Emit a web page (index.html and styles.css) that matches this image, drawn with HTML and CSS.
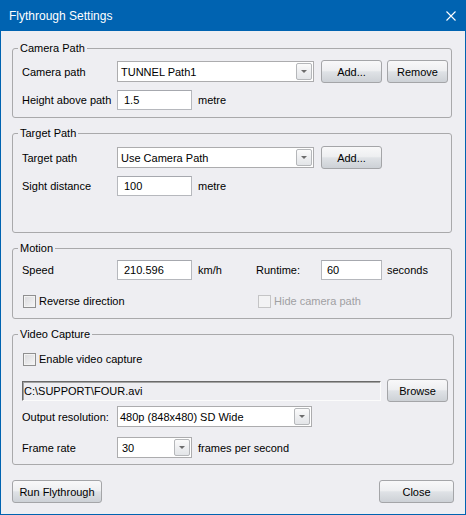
FILE: index.html
```html
<!DOCTYPE html>
<html lang="en">
<head>
    <meta charset="UTF-8">
    <title>Flythrough Settings</title>
    <link rel="stylesheet" href="styles.css">
</head>
<body>
    <div class="window">
        <div class="titlebar">
            <span class="title">Flythrough Settings</span>
            <svg class="close-x" width="10" height="10" viewBox="0 0 10 10">
                <path d="M0.5 0.5 L9.5 9.5 M9.5 0.5 L0.5 9.5" stroke="#fff" stroke-width="1.1" fill="none"/>
            </svg>
        </div>

        <div class="dialog">
            <fieldset class="group group-camera">
                <legend>Camera Path</legend>
                <div class="row row-tall">
                    <label class="lbl">Camera path</label>
                    <div class="combo combo-path">
                        <span class="combo-text">TUNNEL Path1</span>
                        <span class="combo-btn"><i class="arrow"></i></span>
                    </div>
                    <button class="btn btn-add">Add...</button>
                    <button class="btn btn-side">Remove</button>
                </div>
                <div class="row">
                    <label class="lbl">Height above path</label>
                    <div class="field">1.5</div>
                    <span class="unit">metre</span>
                </div>
            </fieldset>

            <fieldset class="group group-target">
                <legend>Target Path</legend>
                <div class="row row-tall">
                    <label class="lbl">Target path</label>
                    <div class="combo combo-path">
                        <span class="combo-text">Use Camera Path</span>
                        <span class="combo-btn"><i class="arrow"></i></span>
                    </div>
                    <button class="btn btn-add">Add...</button>
                </div>
                <div class="row">
                    <label class="lbl">Sight distance</label>
                    <div class="field">100</div>
                    <span class="unit">metre</span>
                </div>
            </fieldset>

            <fieldset class="group group-motion">
                <legend>Motion</legend>
                <div class="row">
                    <label class="lbl">Speed</label>
                    <div class="field">210.596</div>
                    <span class="unit unit-wide">km/h</span>
                    <label class="lbl-runtime">Runtime:</label>
                    <div class="field field-short">60</div>
                    <span class="unit unit-near">seconds</span>
                </div>
                <div class="row row-gap">
                    <div class="check check-first"><span class="box"></span>Reverse direction</div>
                    <div class="check check-off"><span class="box"></span>Hide camera path</div>
                </div>
            </fieldset>

            <fieldset class="group group-video">
                <legend>Video Capture</legend>
                <div class="row">
                    <div class="check"><span class="box"></span>Enable video capture</div>
                </div>
                <div class="row row-tall row-path">
                    <div class="path-field">C:\SUPPORT\FOUR.avi</div>
                    <button class="btn btn-side">Browse</button>
                </div>
                <div class="row row-combo row-res">
                    <label class="lbl">Output resolution:</label>
                    <div class="combo combo-res">
                        <span class="combo-text">480p (848x480) SD Wide</span>
                        <span class="combo-btn"><i class="arrow"></i></span>
                    </div>
                </div>
                <div class="row row-combo row-rate">
                    <label class="lbl">Frame rate</label>
                    <div class="combo combo-rate">
                        <span class="combo-text">30</span>
                        <span class="combo-btn"><i class="arrow"></i></span>
                    </div>
                    <span class="unit">frames per second</span>
                </div>
            </fieldset>

            <div class="footer">
                <button class="btn btn-run">Run Flythrough</button>
                <button class="btn btn-close">Close</button>
            </div>
        </div>
    </div>
</body>
</html>
```

FILE: styles.css
```css
body {
    margin: 0;
    font-family: "Liberation Sans", Arial, sans-serif;
    font-size: 11px;
    color: #000;
    background: #fff;
}
.window {
    width: 466px;
    height: 515px;
    box-sizing: border-box;
    border: 1px solid #0063b1;
    display: flex;
    flex-direction: column;
}
.titlebar {
    height: 30px;
    flex: none;
    background: #0063b1;
    color: #fff;
    font-size: 12px;
    display: flex;
    align-items: center;
    justify-content: space-between;
    padding: 0 9px 0 8px;
}
.close-x {
    display: block;
}
.dialog {
    flex: 1;
    background: #eeeef2;
    padding: 10px 11px 0;
}

/* group boxes */
.group {
    margin: 8px 0 0;
    width: 440px;
    box-sizing: border-box;
    border: 1px solid #a9a9ab;
    border-radius: 3px;
    padding: 5px 3px 7px 9px;
    min-width: 0;
}
.group-camera {
    margin-top: 0;
}
.group-target {
    padding-top: 6px;
    padding-bottom: 36px;
}
.group-video {
    width: 442px;
    padding-top: 8px;
    padding-bottom: 6px;
}
legend {
    margin-left: -4px;
    padding: 0 2px;
    line-height: 14px;
}

/* rows */
.row {
    display: flex;
    align-items: center;
    height: 20px;
}
.row + .row {
    margin-top: 7px;
}
.row-tall {
    height: 23px;
}
.row-gap {
    margin-top: 11px !important;
}
.group-video .row-path {
    margin-top: 10px;
}
.row-combo {
    height: 21px;
}
.group-video .row-res {
    margin-top: 4px;
}
.group-video .row-rate {
    margin-top: 10px;
}
.lbl {
    width: 95px;
    flex: none;
}
.lbl-runtime {
    width: 65px;
    flex: none;
}
.unit {
    margin-left: 6px;
}
.unit-wide {
    width: 58px;
}
.unit-near {
    margin-left: 5px;
}

/* edit boxes */
.field {
    width: 75px;
    height: 20px;
    box-sizing: border-box;
    background: #fff;
    border: 1px solid #b6b8bd;
    border-top-color: #a6a8ae;
    padding-left: 6px;
    display: flex;
    align-items: center;
}
.field-short {
    width: 61px;
    padding-left: 5px;
}
.path-field {
    width: 359px;
    height: 20px;
    box-sizing: border-box;
    border: 1px solid #fbfbfb;
    border-top-color: #6a6a6a;
    border-left-color: #6a6a6a;
    box-shadow: inset 1px 1px 0 #a3a3a3;
    padding-left: 1px;
    display: flex;
    align-items: center;
}

/* combo boxes */
.combo {
    height: 21px;
    box-sizing: border-box;
    background: #fff;
    border: 1px solid #acacae;
    display: flex;
    align-items: center;
    justify-content: space-between;
    padding: 0 1px 0 3px;
}
.combo-path {
    width: 197px;
}
.combo-res {
    width: 195px;
    padding-left: 2px;
}
.combo-rate {
    width: 75px;
    padding-left: 4px;
}
.combo-btn {
    width: 16px;
    height: 17px;
    box-sizing: border-box;
    border: 1px solid #b5b7ba;
    border-radius: 2px;
    background: linear-gradient(#fbfbfb, #eeeff1 50%, #e3e5e8);
    display: flex;
    align-items: center;
    justify-content: center;
}
.arrow {
    width: 0;
    height: 0;
    border-left: 3px solid transparent;
    border-right: 3px solid transparent;
    border-top: 3px solid #6c6c6c;
}

/* buttons */
.btn {
    font: inherit;
    color: #000;
    height: 23px;
    width: 61px;
    padding: 0;
    box-sizing: border-box;
    border: 1px solid #a4a5a8;
    border-radius: 3px;
    background: linear-gradient(#f8f8f9 0%, #eeeff1 45%, #dfe2e6 52%, #cdd1d6 100%);
    flex: none;
}
.btn-add {
    margin-left: 7px;
}
.btn-side {
    margin-left: 5px;
}
.row-path .btn-side {
    margin-left: 6px;
}

/* check boxes */
.check {
    display: flex;
    align-items: center;
    padding-left: 1px;
}
.check-first {
    width: 234px;
}
.box {
    width: 13px;
    height: 13px;
    box-sizing: border-box;
    border: 1px solid #8f8f90;
    background: linear-gradient(135deg, #d9d9dc, #f6f6f7);
    box-shadow: inset 0 0 0 1px #f3f3f3;
    margin-right: 3px;
}
.check-off {
    color: #a0a0a3;
}
.check-off .box {
    border-color: #c4c4c6;
    background: #f2f2f4;
}

/* bottom buttons */
.footer {
    margin-top: 15px;
    display: flex;
    justify-content: space-between;
}
.btn-run {
    width: 90px;
}
.btn-close {
    width: 75px;
}
```
